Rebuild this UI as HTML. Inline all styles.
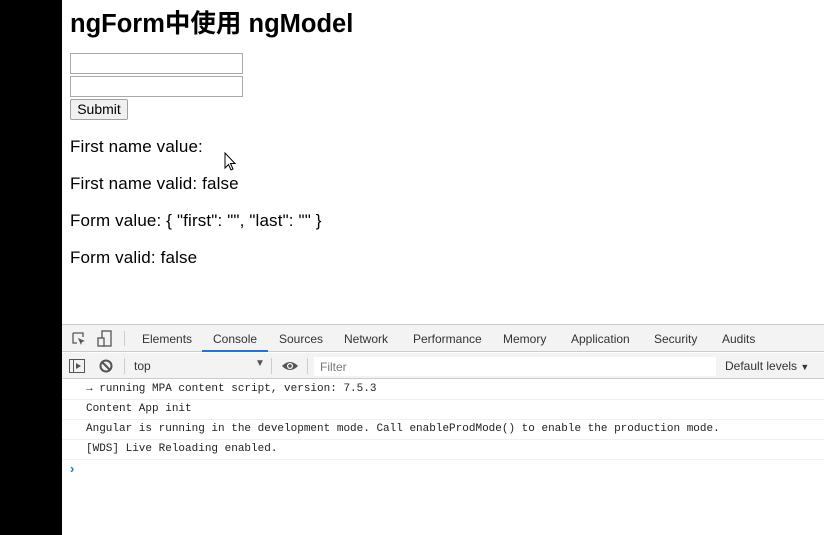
<!DOCTYPE html><html><head><meta charset="utf-8"><style>
*{margin:0;padding:0;box-sizing:border-box}
body{width:824px;height:535px;overflow:hidden;background:#fff;font-family:"Liberation Sans","Noto Sans CJK SC",sans-serif;position:relative}
.a{position:absolute;white-space:nowrap}
.bl{left:0;top:0;width:62px;height:535px;background:#000}
h1{position:absolute;left:70px;top:3px;font-size:25.5px;font-weight:bold;color:#000;white-space:nowrap}
.in{position:absolute;left:70px;width:173px;height:21px;border:1px solid #a9a9a9;background:#fff}
.btn{position:absolute;left:70px;top:99px;width:58px;height:21px;border:1px solid #a0a0a0;background:#f0f0f0;font-size:14px;text-align:center;line-height:19px;border-radius:2px}
.p{position:absolute;left:70px;font-size:17px;letter-spacing:0.15px;color:#000;white-space:nowrap}
.dt{position:absolute;left:62px;top:324px;width:762px;height:211px;background:#fff;border-top:1px solid #ccc}
.tabs{position:absolute;left:0;top:0;width:762px;height:27px;background:#f3f3f3;border-bottom:1px solid #ccc}
.tab{position:absolute;top:7px;font-size:12px;color:#333}
.tb{position:absolute;left:0;top:28px;width:762px;height:26px;background:#f3f3f3;border-bottom:1px solid #ccc}
.row{position:absolute;left:0;width:762px;height:20px;border-bottom:1px solid #f0f0f0;font-family:"Liberation Mono",monospace;font-size:11px;color:#222;padding-left:24px;line-height:19px}
</style></head><body>
<div class="a bl"></div>
<h1>ngForm中使用 ngModel</h1>
<div class="in" style="top:53px"></div>
<div class="in" style="top:76px"></div>
<div class="btn">Submit</div>
<div class="p" style="top:137px">First name value:</div>
<div class="p" style="top:174px">First name valid: false</div>
<div class="p" style="top:211px">Form value: { "first": "", "last": "" }</div>
<div class="p" style="top:248px">Form valid: false</div>
<svg class="a" style="left:224px;top:152px" width="13" height="20" viewBox="0 0 13 20"><path d="M1 1 L1 16 L4.5 12.5 L7 18 L9 17 L6.5 11.5 L11 11.5 Z" fill="#fff" stroke="#000" stroke-width="1"/></svg>
<div class="dt">
<div class="tabs">
<svg class="a" style="left:9px;top:6px" width="16" height="16"><path d="M2 2h10v4M2 2v10h4" fill="none" stroke="#555" stroke-width="1.3"/><path d="M7 7l7 3-3 1-1 3z" fill="#555"/></svg>
<svg class="a" style="left:35px;top:5px" width="16" height="18"><rect x="5" y="1" width="9" height="15" fill="none" stroke="#555" stroke-width="1.3"/><rect x="1" y="8" width="6" height="8" fill="#f3f3f3" stroke="#555" stroke-width="1.3"/></svg>
<div class="a" style="left:62px;top:6px;width:1px;height:15px;background:#ccc"></div>
<span class="tab" style="left:80px">Elements</span>
<span class="tab" style="left:151px">Console</span>
<div class="a" style="left:140px;top:25px;width:66px;height:2px;background:#1a73e8"></div>
<span class="tab" style="left:217px">Sources</span>
<span class="tab" style="left:282px">Network</span>
<span class="tab" style="left:351px">Performance</span>
<span class="tab" style="left:441px">Memory</span>
<span class="tab" style="left:509px">Application</span>
<span class="tab" style="left:592px">Security</span>
<span class="tab" style="left:660px">Audits</span>
</div>
<div class="tb">
<svg class="a" style="left:7px;top:6px" width="16" height="14"><rect x="0.5" y="0.5" width="15" height="13" fill="none" stroke="#555"/><line x1="4.5" y1="1" x2="4.5" y2="13" stroke="#555"/><path d="M7 4l5 3-5 3z" fill="#555"/></svg>
<svg class="a" style="left:37px;top:6px" width="14" height="14"><circle cx="7" cy="7" r="5.5" fill="none" stroke="#555" stroke-width="2"/><line x1="3" y1="3" x2="11" y2="11" stroke="#555" stroke-width="2"/></svg>
<div class="a" style="left:62px;top:5px;width:1px;height:16px;background:#ccc"></div>
<span class="a" style="left:72px;top:6px;font-size:12px;color:#333">top</span>
<span class="a" style="left:193px;top:5px;font-size:10px;color:#555">▼</span>
<div class="a" style="left:209px;top:5px;width:1px;height:16px;background:#ccc"></div>
<svg class="a" style="left:219px;top:7px" width="18" height="12"><path d="M1 6Q9-2 17 6Q9 14 1 6z" fill="#555"/><circle cx="9" cy="6" r="3" fill="#fff"/><circle cx="9" cy="6" r="1.8" fill="#555"/></svg>
<div class="a" style="left:245px;top:5px;width:1px;height:16px;background:#ccc"></div>
<div class="a" style="left:252px;top:4px;width:402px;height:19px;background:#fff"></div>
<span class="a" style="left:258px;top:7px;font-size:12px;color:#777">Filter</span>
<span class="a" style="left:663px;top:6px;font-size:12px;color:#333">Default levels <span style="font-size:9px">▼</span></span>
</div>
<div class="row" style="top:55px">→ running MPA content script, version: 7.5.3</div>
<div class="row" style="top:75px">Content App init</div>
<div class="row" style="top:95px">Angular is running in the development mode. Call enableProdMode() to enable the production mode.</div>
<div class="row" style="top:115px">[WDS] Live Reloading enabled.</div>
<span class="a" style="left:8px;top:136px;font-size:13px;color:#1a73e8;font-weight:bold">›</span>
</div>
</body></html>
